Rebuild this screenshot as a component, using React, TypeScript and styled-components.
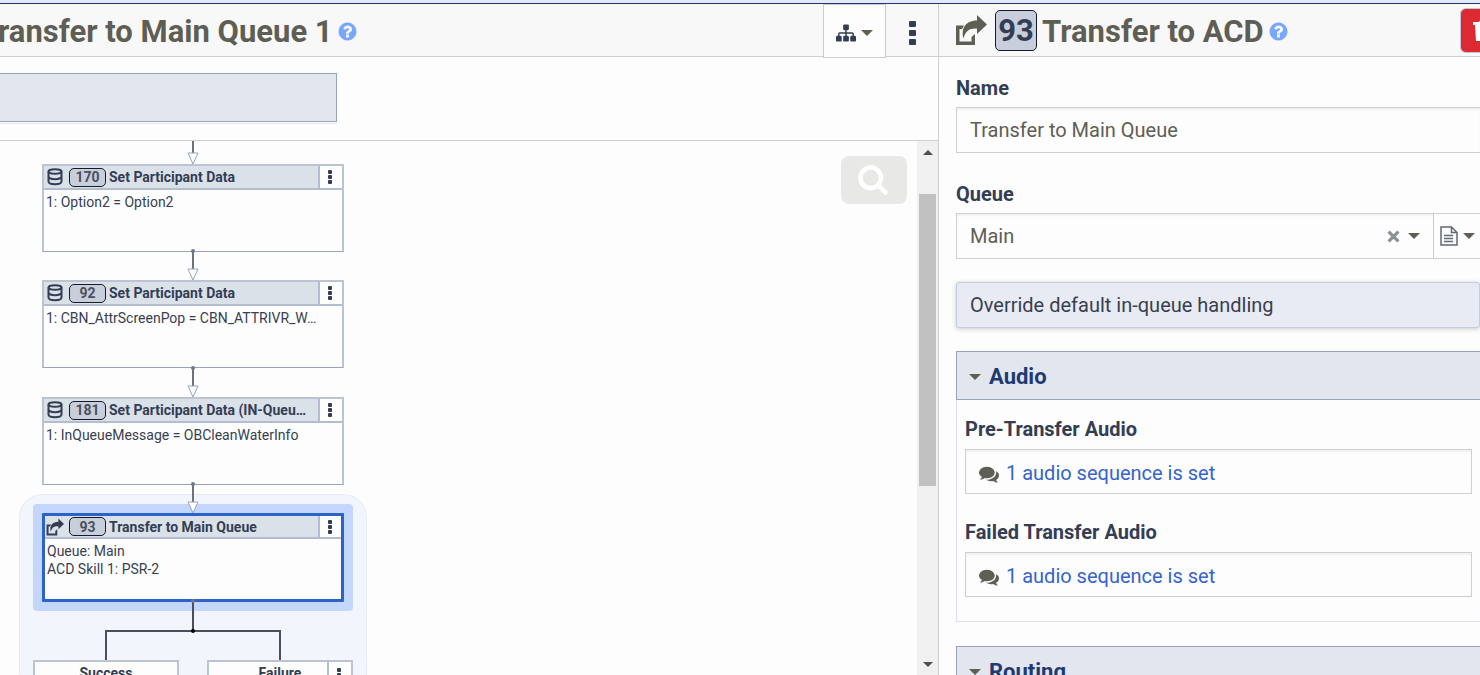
import React from "react";
import styled, { createGlobalStyle } from "styled-components";

const GlobalStyle = createGlobalStyle`
  *, *::before, *::after { box-sizing: border-box; }
  body { margin: 0; background: #fdfdfd; font-family: Roboto, "Liberation Sans", sans-serif; color: #383f50; }
  button, input, select { font: inherit; color: inherit; }
  button { padding: 0; border: 0; background: none; cursor: pointer; }
  h1, h2, p { margin: 0; }
`;

/* ---------- icons ---------- */

const Glyph = styled.svg<{ $size: number }>`
  width: ${(p) => p.$size}px;
  height: ${(p) => p.$size}px;
  flex: none;
  fill: currentColor;
  display: block;
`;

const HelpIcon = () => (
  <Glyph $size={21} viewBox="0 0 1792 1792" aria-hidden>
    <path d="M1024 1376v-192q0-14-9-23t-23-9h-192q-14 0-23 9t-9 23v192q0 14 9 23t23 9h192q14 0 23-9t9-23zm256-672q0-88-55.5-163t-138.5-116-170-41q-243 0-371 213-15 24 8 42l132 100q7 6 19 6 16 0 25-12 53-68 86-92 34-24 86-24 48 0 85.5 26t37.5 59q0 38-20 61t-68 45q-63 28-115.5 86.5t-52.5 125.5v36q0 14 9 23t23 9h192q14 0 23-9t9-23q0-19 21.5-49.5t54.5-49.5q32-18 49-28.5t46-35 44.5-48 28-60.5 12.5-81zm384 192q0 209-103 385.5t-279.5 279.5-385.5 103-385.5-103-279.5-279.5-103-385.5 103-385.5 279.5-279.5 385.5-103 385.5 103 279.5 279.5 103 385.5z" />
  </Glyph>
);

const SitemapIcon = () => (
  <Glyph $size={20} viewBox="0 0 1792 1792" aria-hidden>
    <path d="M1792 1248v320q0 40-28 68t-68 28h-320q-40 0-68-28t-28-68v-320q0-40 28-68t68-28h96v-192h-512v192h96q40 0 68 28t28 68v320q0 40-28 68t-68 28h-320q-40 0-68-28t-28-68v-320q0-40 28-68t68-28h96v-192h-512v192h96q40 0 68 28t28 68v320q0 40-28 68t-68 28h-320q-40 0-68-28t-28-68v-320q0-40 28-68t68-28h96v-192q0-52 38-90t90-38h512v-192h-96q-40 0-68-28t-28-68v-320q0-40 28-68t68-28h320q40 0 68 28t28 68v320q0 40-28 68t-68 28h-96v192h512q52 0 90 38t38 90v192h96q40 0 68 28t28 68z" />
  </Glyph>
);

const CommentsIcon = () => (
  <Glyph $size={20} viewBox="0 0 1792 1792" aria-hidden>
    <path d="M1408 768q0 139-94 257t-256.5 186.5-353.5 68.5q-86 0-176-16-124 88-278 128-36 9-86 16h-3q-11 0-20.5-8t-11.5-21q-1-3-1-6.5t.5-6.5 2-6l2.5-5 3.5-5.5 4-5 4.5-5 4-4.5q5-6 23-25t26-29.5 22.5-29 25-38.5 20.5-44q-124-72-195-177t-71-224q0-139 94-257t256.5-186.5 353.5-68.5 353.5 68.5 256.5 186.5 94 257zm384 256q0 120-71 224.5t-195 176.5q10 24 20.5 44t25 38.5 22.5 29 26 29.5 23 25q1 1 4 4.5t4.5 5 4 5 3.5 5.5l2.5 5 2 6 .5 6.5-1 6.5q-3 14-13 22t-22 7q-50-7-86-16-154-40-278-128-90 16-176 16-271 0-472-132 58 4 88 4 161 0 309-45t264-129q125-92 192-212t67-254q0-77-23-152 129 71 204 178t75 230z" />
  </Glyph>
);

const SearchIcon = () => (
  <Glyph $size={32} viewBox="0 0 1792 1792" aria-hidden>
    <path d="M1216 832q0-185-131.5-316.5t-316.5-131.5-316.5 131.5-131.5 316.5 131.5 316.5 316.5 131.5 316.5-131.5 131.5-316.5zm512 832q0 52-38 90t-90 38q-54 0-90-38l-343-342q-179 124-399 124-143 0-273.5-55.5t-225-150-150-225-55.5-273.5 55.5-273.5 150-225 225-150 273.5-55.5 273.5 55.5 225 150 150 225 55.5 273.5q0 220-124 399l343 343q37 37 37 90z" />
  </Glyph>
);

const TransferIcon = ({ size }: { size: number }) => (
  <Glyph $size={size} viewBox="0 0 32 32" aria-hidden>
    <path d="M9 11.500H1V31H20V20L16.500 23V27.500H4.500V15H7Z" />
    <path d="M22 1 32 10.500 22 20V14.500C14 14 10.500 17 8.500 24.500 5.500 13 12 6.500 22 6.500Z" />
  </Glyph>
);

const DatabaseIcon = () => (
  <Glyph $size={18} viewBox="0 0 18 18" aria-hidden>
    <g fill="none" stroke="currentColor" strokeWidth="2">
      <ellipse cx="9" cy="3.500" rx="6.500" ry="2.300" />
      <path d="M2.500 3.500V13.500C2.500 17 15.500 17 15.500 13.500V3.500M2.500 8.500C3 12 15 12 15.500 8.500" />
    </g>
  </Glyph>
);

const DocumentIcon = () => (
  <Glyph $size={20} viewBox="0 0 20 20" aria-hidden>
    <g fill="none" stroke="currentColor" strokeWidth="1.500">
      <path d="M2 1H12.500L18 6.500V19H2ZM12.500 1V6.500H18M5 9.500H14M5 12.500H14M5 15.500H14" />
    </g>
  </Glyph>
);

const TrashIcon = () => (
  <Glyph $size={24} viewBox="0 0 24 24" aria-hidden>
    <path d="M1 4H7L9 1H15L17 4H23V7H21L20 23H4L3 7H1Z" />
  </Glyph>
);

const CrossIcon = () => (
  <Glyph $size={13} viewBox="0 0 12 12" aria-hidden>
    <path d="M1.500 1.500 10.500 10.500M10.500 1.500 1.500 10.500" stroke="#8b9099" strokeWidth="3" />
  </Glyph>
);

const Caret = styled.span<{ $up?: boolean; $small?: boolean }>`
  flex: none;
  width: 0;
  height: 0;
  border: solid transparent;
  border-width: 0 ${(p) => (p.$small ? 5 : 6)}px;
  ${(p) => (p.$up ? "border-bottom" : "border-top")}: ${(p) => (p.$small ? 5 : 6)}px solid
    ${(p) => (p.$small ? "#4d4d4d" : "#5f5e54")};
`;

const Dots = styled.span<{ $large?: boolean }>`
  display: grid;
  gap: ${(p) => (p.$large ? 3 : 1)}px;
  i {
    width: ${(p) => (p.$large ? 7 : 4)}px;
    height: ${(p) => (p.$large ? 6 : 4)}px;
    border-radius: 1px;
    background: #333d54;
  }
`;

const DotMenu = ({ large }: { large?: boolean }) => (
  <Dots $large={large} aria-hidden>
    <i />
    <i />
    <i />
  </Dots>
);

/* ---------- page frame ---------- */

const Page = styled.div`
  height: 100vh;
  display: flex;
  flex-direction: column;
  overflow: hidden;
`;

const TopStrip = styled.div`
  flex: none;
  height: 4px;
  background: #e1e9fb;
  border-bottom: 1px solid #1e376f;
`;

const Columns = styled.main`
  flex: 1;
  min-height: 0;
  display: grid;
  grid-template-columns: minmax(0, 939fr) minmax(0, 541fr);
`;

const FlowColumn = styled.section`
  display: flex;
  flex-direction: column;
  min-height: 0;
  border-right: 1px solid #cfcfd2;
`;

const DetailColumn = styled.section`
  min-height: 0;
  overflow: hidden;
`;

const PanelHeader = styled.header<{ $indent?: boolean }>`
  flex: none;
  display: flex;
  align-items: center;
  height: 53px;
  padding-left: ${(p) => (p.$indent ? 16 : 0)}px;
  background: #f8f8f8;
  border-bottom: 1px solid #cfcfd2;
  overflow: ${(p) => (p.$indent ? "hidden" : "visible")};
  color: #5f5e54;
`;

const Title = styled.h1<{ $cropped?: boolean }>`
  margin-left: ${(p) => (p.$cropped ? -2 : 5)}px;
  padding-top: 4px;
  font-size: 31px;
  line-height: 40px;
  font-weight: 700;
  white-space: nowrap;
`;

const HelpButton = styled.button`
  margin-left: 4px;
  padding-top: 3px;
  color: #79a7ff;
`;

const LayoutButton = styled.button`
  align-self: flex-start;
  display: flex;
  align-items: center;
  justify-content: center;
  gap: 5px;
  width: 63px;
  height: 54px;
  margin-left: auto;
  padding-top: 4px;
  background: #fdfdfd;
  border: 1px solid #c6cbdc;
  color: #333d54;
`;

const MoreButton = styled.button`
  display: grid;
  place-items: center;
  width: 52px;
  height: 53px;
  padding-top: 6px;
`;

const DeleteButton = styled.button`
  flex: none;
  display: grid;
  place-items: center;
  width: 48px;
  height: 45px;
  margin: 0 -28px 0 auto;
  border: 1px solid #c0c6d6;
  border-radius: 6px;
  background: #dc2a33;
  color: #fff;
`;

/* ---------- flow canvas ---------- */

const SettingsBand = styled.div`
  flex: none;
  height: 84px;
  padding-top: 16px;
  border-bottom: 1px solid #cfcfd2;
`;

const SettingsBar = styled.div`
  width: 35.9%;
  height: 51px;
  border-bottom: 1px solid #dfe4ed;
  &::before {
    content: "";
    display: block;
    height: 49px;
    background: #e2e6ef;
    border: 1px solid #98a3ba;
    border-left: 0;
  }
`;

const CanvasRow = styled.div`
  flex: 1;
  min-height: 0;
  display: flex;
`;

const Canvas = styled.div`
  position: relative;
  flex: 1;
  overflow: hidden;
`;

const SearchButton = styled.button`
  position: absolute;
  top: 15px;
  right: 10px;
  display: grid;
  place-items: center;
  width: 66px;
  height: 48px;
  padding: 0 2px 2px 0;
  border-radius: 8px;
  background: #e8e8e6;
  color: #fff;
`;

const Scrollbar = styled.div`
  flex: none;
  display: flex;
  flex-direction: column;
  width: 21px;
  background: #f0f0f0;
`;

const ScrollStep = styled.button`
  display: grid;
  place-items: center;
  height: 22px;
`;

const ScrollSpace = styled.div<{ $grow: number }>`
  flex: ${(p) => p.$grow};
`;

const ScrollThumb = styled.div`
  flex: 292;
  margin: 0 2px;
  background: #c1c1c1;
`;

const Group = styled.div`
  position: absolute;
  left: 19px;
  top: 353px;
  width: 348px;
  height: 240px;
  border: 1px dotted #d9e0ee;
  border-radius: 24px;
  background: #f2f5fb;
`;

const Node = styled.article<{ $top: number; $selected?: boolean }>`
  position: absolute;
  left: 42px;
  top: ${(p) => p.$top}px;
  width: 302px;
  height: ${(p) => (p.$selected ? 89 : 88)}px;
  background: #fdfdfd;
  border: 2px solid #bcc4d4;
  border-bottom: 1px solid #97a3ba;
  ${(p) =>
    p.$selected &&
    `border: 3px solid #2d63c8;
     box-shadow: 0 0 0 9px #c3d7fd;
     border-radius: 1px;`}
`;

const NodeMenu = styled.button`
  flex: none;
  align-self: stretch;
  display: grid;
  place-items: center;
  width: 24px;
  padding-right: 2px;
  background: #fdfdfd;
  border-left: 2px solid #b4bdcd;
`;

const NodeHeader = styled.div<{ $selected?: boolean }>`
  display: flex;
  align-items: center;
  height: ${(p) => (p.$selected ? 23 : 24)}px;
  padding-left: ${(p) => (p.$selected ? 1 : 2)}px;
  background: #dae1e9;
  border-bottom: 2px solid #b4bdcd;
  color: #333d54;
  ${NodeMenu} {
    width: ${(p) => (p.$selected ? 23 : 24)}px;
  }
`;

const Badge = styled.span<{ $large?: boolean }>`
  flex: none;
  display: grid;
  place-items: center;
  width: ${(p) => (p.$large ? 42 : 37)}px;
  height: ${(p) => (p.$large ? 41 : 19)}px;
  margin-left: ${(p) => (p.$large ? 8 : 5)}px;
  border: 1px solid #151b28;
  border-radius: 5px;
  background: #c8cedb;
  color: ${(p) => (p.$large ? "#333d54" : "#4a5060")};
  font-size: ${(p) => (p.$large ? 31 : 14)}px;
  font-weight: 700;
`;

const NodeTitle = styled.h2`
  flex: 1;
  min-width: 0;
  padding-right: 6px;
  margin-left: 3px;
  overflow: hidden;
  text-overflow: ellipsis;
  white-space: nowrap;
  font-size: 14px;
  line-height: 18px;
  font-weight: 700;
`;

const NodeLine = styled.p`
  padding-left: 2px;
  overflow: hidden;
  text-overflow: ellipsis;
  white-space: nowrap;
  font-size: 14px;
  line-height: 18px;
`;

const NodeBody = styled.div`
  padding: 3px 17px 0 0;
`;

const Branch = styled.article<{ $left: number }>`
  position: absolute;
  left: ${(p) => p.$left}px;
  top: 519px;
  display: flex;
  width: 146px;
  height: 30px;
  background: #fdfdfd;
  border: 2px solid #bcc4d4;
  color: #333d54;
`;

const BranchTitle = styled.h2<{ $menu?: boolean }>`
  flex: 1;
  padding: 2px 0 0 ${(p) => (p.$menu ? 24 : 0)}px;
  text-align: center;
  font-size: 14px;
  line-height: 18px;
  font-weight: 700;
`;

const Edges = styled.svg`
  position: absolute;
  left: 0;
  top: 0;
  width: 400px;
  height: 534px;
  pointer-events: none;
`;

const NODES = [
  { id: "170", top: 23, title: "Set Participant Data", lines: ["1: Option2 = Option2"] },
  {
    id: "92",
    top: 139,
    title: "Set Participant Data",
    lines: ["1: CBN_AttrScreenPop = CBN_ATTRIVR_W…"],
  },
  {
    id: "181",
    top: 256,
    title: "Set Participant Data (IN-Queu…",
    lines: ["1: InQueueMessage = OBCleanWaterInfo"],
  },
  {
    id: "93",
    top: 372,
    title: "Transfer to Main Queue",
    lines: ["Queue: Main", "ACD Skill 1: PSR-2"],
    selected: true,
  },
];

const ARROWS = [
  { from: 0, to: 24 },
  { from: 110, to: 140 },
  { from: 227, to: 257 },
  { from: 343, to: 373 },
];

/* ---------- detail form ---------- */

const Form = styled.form`
  padding: 19px 0 0 17px;
`;

const Field = styled.div<{ $gap: number }>`
  margin-bottom: ${(p) => p.$gap}px;
`;

const Label = styled.label`
  display: block;
  margin-bottom: 7px;
  font-size: 20px;
  line-height: 24px;
  font-weight: 700;
  color: #333d54;
`;

const TextInput = styled.input`
  display: block;
  width: 100%;
  height: 46px;
  padding: 0 13px;
  border: 1px solid #cfcfd2;
  border-right: 0;
  border-radius: 0;
  background: #fdfdfd;
  box-shadow: inset 0 2px 2px #f1f1f1;
  font-size: 20px;
  color: #5f5e54;
`;

const Picker = styled.div`
  display: flex;
  align-items: center;
  height: 46px;
  border: 1px solid #cfcfd2;
  border-right: 0;
  box-shadow: inset 0 2px 2px #f1f1f1;
`;

const PickerSelect = styled.select`
  flex: 1;
  min-width: 0;
  height: 44px;
  padding: 0 13px;
  border: 0;
  appearance: none;
  background: transparent;
  font-size: 20px;
  color: #5f5e54;
`;

const ClearButton = styled.button`
  margin-right: 8px;
`;

const ModeButton = styled.button`
  align-self: stretch;
  display: flex;
  align-items: center;
  gap: 4px;
  width: 47px;
  margin-left: 13px;
  padding-left: 5px;
  border-left: 1px solid #c6cbdc;
  color: #5f6878;
  background: #fdfdfd;
`;

const OverrideButton = styled.button`
  display: block;
  width: 100%;
  height: 46px;
  margin-bottom: 23px;
  padding: 0 13px;
  border: 1px solid #c4cddb;
  border-radius: 3px;
  background: #e8ebf3;
  box-shadow: 0 1px 5px #cccccc;
  text-align: left;
  font-size: 20px;
  color: #383f50;
`;

const SectionToggle = styled.button`
  display: flex;
  align-items: center;
  gap: 8px;
  width: 100%;
  height: 49px;
  padding: 2px 0 0 12px;
  border: 1px solid #98a3ba;
  border-right: 0;
  background: #e2e6ef;
  font-size: 22px;
  font-weight: 700;
  color: #1f3a72;
`;

const SectionBody = styled.div`
  margin-bottom: 24px;
  padding: 17px 8px 24px;
  border: solid #d9e0ea;
  border-width: 0 0 1px 1px;
`;

const AudioLabel = styled(Label)`
  margin-bottom: 8px;
`;

const AudioBox = styled.div`
  display: flex;
  align-items: center;
  gap: 7px;
  height: 45px;
  padding: 2px 13px 0;
  border: 1px solid #cfcfd2;
  box-shadow: inset 0 2px 2px #f1f1f1;
  color: #5f5e54;
  svg {
    margin-top: 3px;
  }
`;

const AudioLink = styled.a`
  font-size: 20px;
  line-height: 24px;
  color: #3564cc;
  text-decoration: none;
`;

const AudioField = ({ id, label, last }: { id: string; label: string; last?: boolean }) => (
  <Field $gap={last ? 0 : 26}>
    <AudioLabel as="div" id={id}>
      {label}
    </AudioLabel>
    <AudioBox>
      <CommentsIcon />
      <AudioLink href="#audio" aria-describedby={id}>
        1 audio sequence is set
      </AudioLink>
    </AudioBox>
  </Field>
);

export default function App() {
  return (
    <Page>
      <GlobalStyle />
      <TopStrip />
      <Columns>
        <FlowColumn>
          <PanelHeader>
            <Title $cropped>ransfer to Main Queue 1</Title>
            <HelpButton aria-label="Help">
              <HelpIcon />
            </HelpButton>
            <LayoutButton aria-label="Layout">
              <SitemapIcon />
              <Caret />
            </LayoutButton>
            <MoreButton aria-label="More">
              <DotMenu large />
            </MoreButton>
          </PanelHeader>
          <SettingsBand>
            <SettingsBar />
          </SettingsBand>
          <CanvasRow>
            <Canvas>
              <Group />
              {NODES.map((node) => (
                <Node key={node.id} $top={node.top} $selected={node.selected}>
                  <NodeHeader $selected={node.selected}>
                    {node.selected ? <TransferIcon size={18} /> : <DatabaseIcon />}
                    <Badge>{node.id}</Badge>
                    <NodeTitle>{node.title}</NodeTitle>
                    <NodeMenu aria-label={`Menu ${node.id}`}>
                      <DotMenu />
                    </NodeMenu>
                  </NodeHeader>
                  <NodeBody>
                    {node.lines.map((line) => (
                      <NodeLine key={line}>{line}</NodeLine>
                    ))}
                  </NodeBody>
                </Node>
              ))}
              <Branch $left={33}>
                <BranchTitle>Success</BranchTitle>
              </Branch>
              <Branch $left={207}>
                <BranchTitle $menu>Failure</BranchTitle>
                <NodeMenu aria-label="Menu Failure">
                  <DotMenu />
                </NodeMenu>
              </Branch>
              <Edges aria-hidden>
                {ARROWS.map(({ from, to }) => (
                  <g key={to}>
                    <path d={`M193 ${from}V${to - 12}`} stroke="#6d727e" strokeWidth="2" />
                    {from > 0 && <circle cx="193" cy={from} r="2" fill="#6d7890" />}
                    <path
                      d={`M188 ${to - 12}H198L193 ${to - 1}Z`}
                      fill="#fdfdfd"
                      stroke="#9aa5ba"
                    />
                  </g>
                ))}
                <path
                  d="M193 460V489M106 519V490H280V519"
                  fill="none"
                  stroke="#4a4f5c"
                  strokeWidth="2"
                />
                <circle cx="193" cy="490" r="2" fill="#000" />
                <circle cx="193" cy="460" r="2" fill="#6d7890" />
              </Edges>
              <SearchButton aria-label="Search">
                <SearchIcon />
              </SearchButton>
            </Canvas>
            <Scrollbar>
              <ScrollStep aria-label="Scroll up">
                <Caret $up $small />
              </ScrollStep>
              <ScrollSpace $grow={31} />
              <ScrollThumb />
              <ScrollSpace $grow={167} />
              <ScrollStep aria-label="Scroll down">
                <Caret $small />
              </ScrollStep>
            </Scrollbar>
          </CanvasRow>
        </FlowColumn>

        <DetailColumn>
          <PanelHeader $indent>
            <TransferIcon size={32} />
            <Badge $large>93</Badge>
            <Title>Transfer to ACD</Title>
            <HelpButton aria-label="Help">
              <HelpIcon />
            </HelpButton>
            <DeleteButton aria-label="Delete">
              <TrashIcon />
            </DeleteButton>
          </PanelHeader>
          <Form>
            <Field $gap={29}>
              <Label htmlFor="name">Name</Label>
              <TextInput id="name" defaultValue="Transfer to Main Queue" />
            </Field>
            <Field $gap={23}>
              <Label htmlFor="queue">Queue</Label>
              <Picker>
                <PickerSelect id="queue">
                  <option>Main</option>
                </PickerSelect>
                <ClearButton type="button" aria-label="Clear">
                  <CrossIcon />
                </ClearButton>
                <Caret />
                <ModeButton type="button" aria-label="Value type">
                  <DocumentIcon />
                  <Caret />
                </ModeButton>
              </Picker>
            </Field>
            <OverrideButton type="button">Override default in-queue handling</OverrideButton>
            <SectionToggle type="button" aria-expanded>
              <Caret />
              Audio
            </SectionToggle>
            <SectionBody>
              <AudioField id="pre" label="Pre-Transfer Audio" />
              <AudioField id="failed" label="Failed Transfer Audio" last />
            </SectionBody>
            <SectionToggle type="button" aria-expanded>
              <Caret />
              Routing
            </SectionToggle>
          </Form>
        </DetailColumn>
      </Columns>
    </Page>
  );
}
